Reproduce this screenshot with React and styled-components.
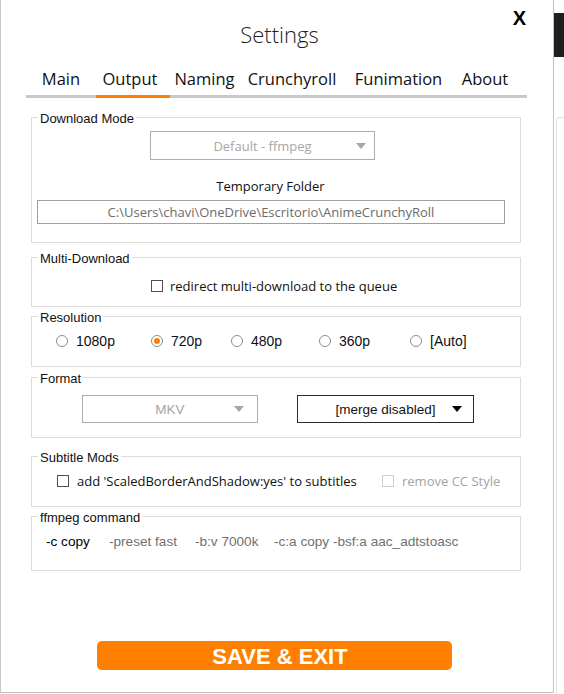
import React from 'react';
import styled, { createGlobalStyle } from 'styled-components';

const GlobalStyle = createGlobalStyle`
    html, body {
        margin: 0;
        padding: 0;
        background: #fff;
    }
`;

const UI = '"Open Sans", "Noto Sans", sans-serif';
const SANS = '"Liberation Sans", Arial, sans-serif';
const ORANGE = '#ff8000';

const Page = styled.div`
    display: flex;
    width: 564px;
    height: 694px;
    overflow: hidden;
`;

const Window = styled.div`
    box-sizing: border-box;
    width: 554px;
    height: 693px;
    border-left: 1px solid #c8c8c8;
    border-right: 1px solid #c4c4c4;
    border-bottom: 1px solid #c4c4c4;
    display: flex;
    flex-direction: column;
    color: #1a1a1a;
`;

const Behind = styled.div`
    flex: 1;
    display: flex;
    flex-direction: column;
    padding-top: 13px;
`;

const DarkBar = styled.div`
    height: 44px;
    background: #1f1f1f;
`;

const BehindPanel = styled.div`
    flex: 1;
    margin: 60px 0 0 2px;
    border-left: 1px solid #dde1e6;
    border-top: 1px solid #e2e2e2;
    border-top-left-radius: 4px;
`;

const Header = styled.div`
    display: grid;
    grid-template-columns: 1fr auto 1fr;
    padding: 8px 27px 0 0;
`;

const Title = styled.h1`
    grid-column: 2;
    margin: 11px 0 0 32px;
    font-family: ${UI};
    font-weight: 300;
    font-size: 22px;
    line-height: 30px;
    color: #222;
`;

const Close = styled.button`
    grid-column: 3;
    justify-self: end;
    align-self: start;
    border: 0;
    background: none;
    padding: 0;
    font-family: ${SANS};
    font-weight: bold;
    font-size: 20px;
    line-height: 20px;
    color: #000;
    cursor: pointer;
`;

const TabBar = styled.div`
    display: flex;
    width: 501px;
    margin: 18px 0 0 25px;
    border-bottom: 3px solid #c8c8c8;
`;

const Tab = styled.div`
    box-sizing: border-box;
    width: ${p => p.$w}px;
    margin-bottom: -3px;
    padding: 0 ${p => p.$pr || 0}px 4px 0;
    border-bottom: 3px solid ${p => (p.$active ? ORANGE : 'transparent')};
    text-align: center;
    font-family: ${UI};
    font-size: 16.5px;
    line-height: 24px;
    color: #111;
`;

const Group = styled.fieldset`
    box-sizing: border-box;
    width: 490px;
    height: ${p => p.$h}px;
    margin: ${p => p.$mt}px 0 0 30px;
    padding: 0;
    min-width: 0;
    border: 1px solid #dcdcdc;
`;

const Legend = styled.legend`
    margin-left: 6px;
    padding: 4px 2px 0;
    font-family: ${SANS};
    font-size: 13px;
    line-height: 14px;
    color: #111;
`;

const Column = styled.div`
    display: flex;
    flex-direction: column;
    align-items: flex-start;
`;

const Select = styled.div`
    box-sizing: border-box;
    display: grid;
    grid-template-columns: ${p => p.$r * 2}px 1fr ${p => p.$r * 2}px;
    align-items: center;
    width: ${p => p.$w}px;
    height: ${p => p.$h}px;
    margin: ${p => p.$m};
    border: 1px solid ${p => (p.$disabled ? '#adadad' : '#2b2b2b')};
    color: ${p => (p.$disabled ? '#a6a6a6' : '#111')};
    font-family: ${p => (p.$ui ? UI : SANS)};
    font-size: ${p => (p.$ui ? 13 : 13.5)}px;
`;

const SelectText = styled.span`
    grid-column: 2;
    text-align: center;
    white-space: nowrap;
`;

const Arrow = styled.span`
    justify-self: center;
    width: 0;
    height: 0;
    border-left: 5px solid transparent;
    border-right: 5px solid transparent;
    border-top: 6px solid ${p => (p.$disabled ? '#a6a6a6' : '#000')};
`;

const FieldLabel = styled.div`
    width: 467px;
    margin: 18px 0 0 5px;
    text-align: center;
    font-family: ${UI};
    font-size: 13px;
    line-height: 17px;
    color: #111;
`;

const PathInput = styled.div`
    box-sizing: border-box;
    width: 468px;
    height: 24px;
    margin: 5px 0 0 5px;
    border: 1px solid #a0a0a0;
    text-align: center;
    font-family: ${UI};
    font-size: 13px;
    line-height: 22px;
    color: #6b6b6b;
    white-space: nowrap;
`;

const Row = styled.div`
    display: ${p => (p.$cols ? 'grid' : 'flex')};
    grid-template-columns: ${p => p.$cols || 'none'};
    align-items: center;
    margin-top: ${p => p.$mt}px;
    padding-left: ${p => p.$pl}px;
`;

const Option = styled.label`
    display: flex;
    align-items: center;
    gap: ${p => p.$gap || 8}px;
    font-family: ${p => (p.$ui ? UI : SANS)};
    font-size: ${p => (p.$ui ? 13 : 14)}px;
    line-height: 16px;
    color: ${p => (p.$disabled ? '#a3a3a3' : '#111')};
    white-space: nowrap;
`;

const Box = styled.span`
    box-sizing: border-box;
    flex: none;
    width: 12px;
    height: 12px;
    border: 1px solid ${p => (p.$disabled ? '#cfcfcf' : '#505050')};
    background: #fff;
`;

const Radio = styled.span`
    box-sizing: border-box;
    flex: none;
    display: grid;
    place-items: center;
    width: 12px;
    height: 12px;
    border: 1px solid #8c8c8c;
    border-radius: 50%;

    &::after {
        content: '';
        width: 6px;
        height: 6px;
        border-radius: 50%;
        background: ${p => (p.$checked ? ORANGE : 'transparent')};
    }
`;

const Cmd = styled.span`
    font-family: ${SANS};
    font-size: 13.6px;
    line-height: 16px;
    color: ${p => (p.$on ? '#000' : '#707070')};
    white-space: nowrap;
`;

const SaveButton = styled.button`
    box-sizing: border-box;
    width: 355px;
    height: 29px;
    margin: 70px 0 0 96px;
    padding: 2px 0 0 11px;
    border: 0;
    border-radius: 5px;
    background: ${ORANGE};
    color: #fff;
    font-family: ${SANS};
    font-weight: bold;
    font-size: 22px;
    line-height: 27px;
    cursor: pointer;
`;

const TABS = [
    ['Main', 70, 0],
    ['Output', 74, 6],
    ['Naming', 69, 0],
    ['Crunchyroll', 106, 0],
    ['Funimation', 107, 0],
    ['About', 66, 0]
];

const RESOLUTIONS = ['1080p', '720p', '480p', '360p', '[Auto]'];

const COMMAND = [
    ['-c copy', true],
    ['-preset fast', false],
    ['-b:v 7000k', false],
    ['-c:a copy -bsf:a aac_adtstoasc', false]
];

const App = () => (
    <Page>
        <GlobalStyle />
        <Window>
            <Header>
                <Title>Settings</Title>
                <Close>X</Close>
            </Header>

            <TabBar>
                {TABS.map(([name, w, pr]) => (
                    <Tab key={name} $w={w} $pr={pr} $active={name === 'Output'}>{name}</Tab>
                ))}
            </TabBar>

            <Group $h={135} $mt={10}>
                <Legend>Download Mode</Legend>
                <Column>
                    <Select $disabled $ui $w={225} $h={29} $r={13} $m="5px 0 0 118px">
                        <SelectText>Default - ffmpeg</SelectText>
                        <Arrow $disabled />
                    </Select>
                    <FieldLabel>Temporary Folder</FieldLabel>
                    <PathInput>C:\Users\chavi\OneDrive\Escritorio\AnimeCrunchyRoll</PathInput>
                </Column>
            </Group>

            <Group $h={59} $mt={5}>
                <Legend>Multi-Download</Legend>
                <Row $mt={12} $pl={119}>
                    <Option $ui $gap={7}>
                        <Box />
                        redirect multi-download to the queue
                    </Option>
                </Row>
            </Group>

            <Group $h={60} $mt={0}>
                <Legend>Resolution</Legend>
                <Row $mt={8} $pl={24} $cols="95px 80px 88px 91px auto">
                    {RESOLUTIONS.map(r => (
                        <Option key={r}>
                            <Radio $checked={r === '720p'} />
                            {r}
                        </Option>
                    ))}
                </Row>
            </Group>

            <Group $h={70} $mt={1}>
                <Legend>Format</Legend>
                <Row $mt={9} $pl={50}>
                    <Select $disabled $w={176} $h={28} $r={18} $m="0">
                        <SelectText>MKV</SelectText>
                        <Arrow $disabled />
                    </Select>
                    <Select $w={177} $h={28} $r={16} $m="0 0 0 39px">
                        <SelectText>[merge disabled]</SelectText>
                        <Arrow />
                    </Select>
                </Row>
            </Group>

            <Group $h={60} $mt={9}>
                <Legend>Subtitle Mods</Legend>
                <Row $mt={8} $pl={25} $cols="325px auto">
                    <Option $ui>
                        <Box />
                        add 'ScaledBorderAndShadow:yes' to subtitles
                    </Option>
                    <Option $ui $disabled>
                        <Box $disabled />
                        remove CC Style
                    </Option>
                </Row>
            </Group>

            <Group $h={64} $mt={0}>
                <Legend>ffmpeg command</Legend>
                <Row $mt={9} $pl={14} $cols="63px 86px 79px auto">
                    {COMMAND.map(([text, on]) => (
                        <Cmd key={text} $on={on}>{text}</Cmd>
                    ))}
                </Row>
            </Group>

            <SaveButton>SAVE &amp; EXIT</SaveButton>
        </Window>
        <Behind>
            <DarkBar />
            <BehindPanel />
        </Behind>
    </Page>
);

export default App;
